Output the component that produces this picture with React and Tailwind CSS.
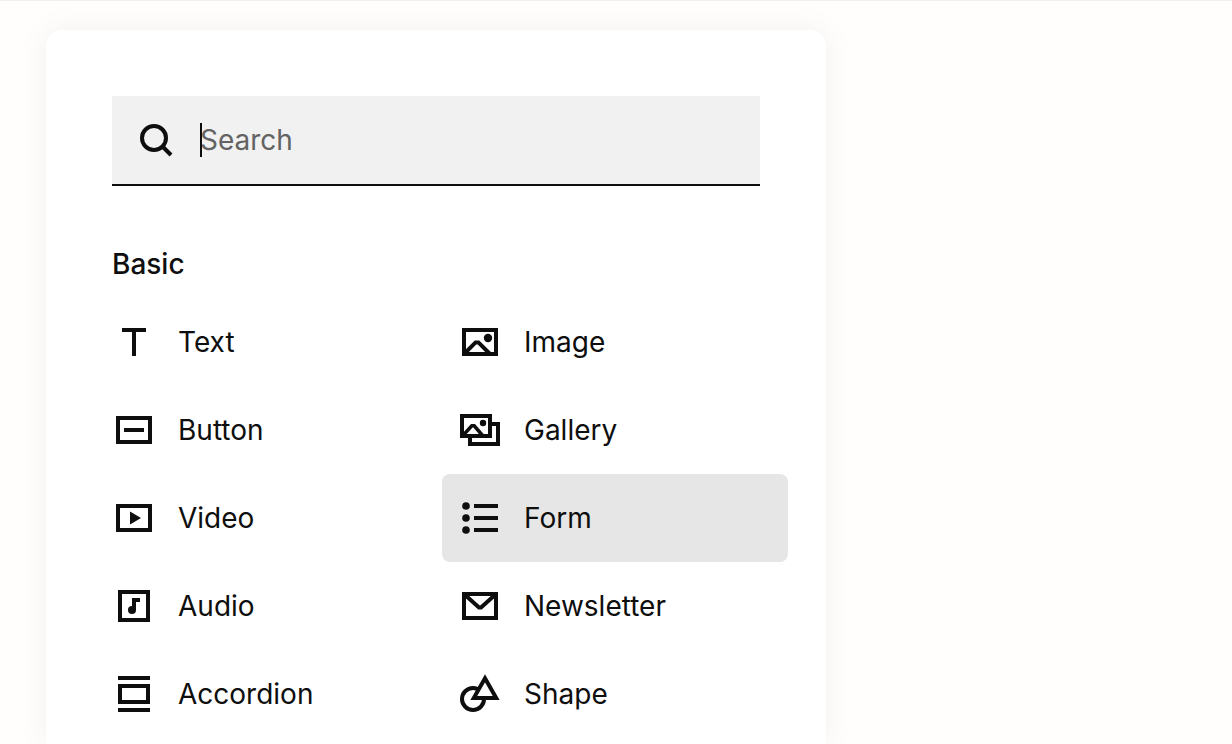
import { useState } from "react";

const Icon = ({ children }) => (
  <svg
    viewBox="0 0 44 44"
    className="w-11 h-11 shrink-0"
    fill="none"
    stroke="currentColor"
    strokeWidth="4"
    aria-hidden="true"
  >
    {children}
  </svg>
);

const blocks = [
  {
    name: "Text",
    icon: <path d="M10 10h24M22 10v26" />,
  },
  {
    name: "Image",
    icon: (
      <>
        <rect x="6" y="10" width="32" height="24" />
        <path d="M6 34L17.6 22.4h2.8L32 34" />
        <circle cx="30" cy="18" r="4.2" fill="currentColor" stroke="none" />
      </>
    ),
  },
  {
    name: "Button",
    icon: (
      <>
        <rect x="6" y="10" width="32" height="24" />
        <path d="M12 22h20" />
      </>
    ),
  },
  {
    name: "Gallery",
    icon: (
      <>
        <path d="M34 16h6v20H12v-6" />
        <rect x="4" y="8" width="28" height="20" />
        <path d="M4.5 28l9.3-10.2h2.4L25 28" strokeWidth="3.5" />
        <circle cx="25" cy="15" r="3.2" fill="currentColor" stroke="none" />
      </>
    ),
  },
  {
    name: "Video",
    icon: (
      <>
        <rect x="6" y="10" width="32" height="24" />
        <path d="M18 15.5v13L29 22z" fill="currentColor" stroke="none" />
      </>
    ),
  },
  {
    name: "Form",
    icon: (
      <>
        <path d="M16 10h24M16 22h24M16 34h24" />
        <g fill="currentColor" stroke="none">
          <circle cx="8" cy="10" r="3.8" />
          <circle cx="8" cy="22" r="3.8" />
          <circle cx="8" cy="34" r="3.8" />
        </g>
      </>
    ),
  },
  {
    name: "Audio",
    icon: (
      <>
        <rect x="8" y="8" width="28" height="28" />
        <g fill="currentColor" stroke="none">
          <path d="M20 14h8v4h-4v8h-4z" />
          <circle cx="20" cy="26" r="4" />
        </g>
      </>
    ),
  },
  {
    name: "Newsletter",
    icon: (
      <>
        <rect x="6" y="10" width="32" height="24" />
        <path d="M6 10l15 13.5h2L38 10" />
      </>
    ),
  },
  {
    name: "Accordion",
    icon: (
      <>
        <path d="M6 6h32M6 38h32" />
        <rect x="8" y="14" width="28" height="16" />
      </>
    ),
  },
  {
    name: "Shape",
    icon: (
      <>
        <circle cx="15" cy="27" r="11" />
        <path d="M27 6.2L38.2 26H15.8z" fill="white" />
      </>
    ),
  },
];

const BlockItem = ({ block, active, onHover }) => (
  <button
    type="button"
    onMouseEnter={onHover}
    className={`flex items-center gap-[22px] h-22 px-4 rounded-lg text-left ${
      active ? "bg-[#e6e6e6]" : ""
    }`}
  >
    <Icon>{block.icon}</Icon>
    <span>{block.name}</span>
  </button>
);

const App = () => {
  const [query, setQuery] = useState("");
  const [active, setActive] = useState("Form");

  const visible = blocks.filter((b) =>
    b.name.toLowerCase().includes(query.toLowerCase())
  );

  return (
    <div className="min-h-screen flex flex-col bg-[#fffefc] border-t border-[#f0f0f0] pt-[29px] px-[46px] font-['Inter',sans-serif] text-[28px] leading-9 text-[#0e0e0e]">
      <main className="flex-1 w-full max-w-[780px] bg-white rounded-t-2xl pt-[66px] shadow-[0_0_32px_rgba(0,0,0,0.06)]">
        {/* Search */}
        <div className="px-[66px]">
          <label className="flex items-center gap-[22px] h-[90px] px-[22px] bg-[#f1f1f1] border-b-2 border-[#0e0e0e]">
            <Icon>
              <circle cx="20" cy="20" r="12" />
              <path d="M28 28l9 9" />
            </Icon>
            <span className="relative flex-1">
              <input
                type="text"
                aria-label="Search"
                placeholder="Search"
                value={query}
                onChange={(e) => setQuery(e.target.value)}
                className="block w-full bg-transparent outline-none placeholder:text-[#636363]"
              />
              {query === "" && (
                <span className="absolute left-0 top-px w-0.5 h-[34px] bg-[#0e0e0e]" />
              )}
            </span>
          </label>
        </div>

        {/* Blocks */}
        <h2 className="mt-[60px] mb-4 px-[66px] font-medium">Basic</h2>
        <div className="grid grid-cols-2 pl-[50px] pr-[38px]">
          {visible.map((block) => (
            <BlockItem
              key={block.name}
              block={block}
              active={active === block.name}
              onHover={() => setActive(block.name)}
            />
          ))}
        </div>
      </main>
    </div>
  );
};

export default App;
